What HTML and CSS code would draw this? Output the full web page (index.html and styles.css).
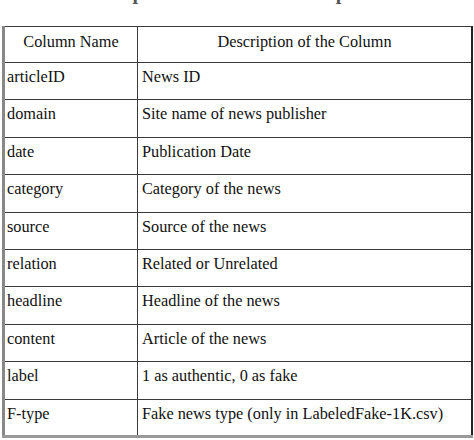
FILE: index.html
```html
<!DOCTYPE html>
<html>
<head>
<meta charset="utf-8">
<link rel="stylesheet" href="styles.css">
</head>
<body>
<div class="caption"><div class="caption-text">Table 1. Description of the dataset samples</div></div>
<table class="schema">
<thead>
<tr><th class="c1">Column Name</th><th class="c2">Description of the Column</th></tr>
</thead>
<tbody>
<tr><td>articleID</td><td>News ID</td></tr>
<tr><td>domain</td><td>Site name of news publisher</td></tr>
<tr><td>date</td><td>Publication Date</td></tr>
<tr><td>category</td><td>Category of the news</td></tr>
<tr><td>source</td><td>Source of the news</td></tr>
<tr><td>relation</td><td>Related or Unrelated</td></tr>
<tr><td>headline</td><td>Headline of the news</td></tr>
<tr><td>content</td><td>Article of the news</td></tr>
<tr><td>label</td><td>1 as authentic, 0 as fake</td></tr>
<tr><td>F-type</td><td>Fake news type (only in LabeledFake-1K.csv)</td></tr>
</tbody>
</table>
</body>
</html>
```
FILE: styles.css
```css
html, body {
  margin: 0;
  padding: 0;
  background: #fff;
}
body {
  font-family: "Liberation Serif", "Times New Roman", serif;
  color: #111;
  width: 474px;
  height: 440px;
  overflow: hidden;
}
.caption {
  height: 26px;
  overflow: hidden;
}
.caption-text {
  margin-top: -18px;
  margin-left: 6px;
  font-family: "Liberation Serif", "Times New Roman", serif;
  font-size: 20px;
  line-height: 20px;
  font-weight: bold;
  color: #555;
}
.schema {
  margin-left: 2px;
  width: 471px;
  border-collapse: collapse;
  font-family: "Liberation Serif", "Times New Roman", serif;
  font-size: 16px;
  table-layout: fixed;
  border-top: 1.5px solid #555;
  border-left: 3px solid #888;
  border-right: 2.5px solid #222;
  border-bottom: 3px solid #999;
}
.schema th, .schema td {
  font-family: "Liberation Serif", "Times New Roman", serif;
  font-size: 16.3px;
  color: #111;
  border: 1.4px solid #3a3a3a;
  padding: 0;
}
.schema th {
  font-weight: normal;
  text-align: center;
  height: 36px;
  box-sizing: border-box;
  vertical-align: top;
  padding-top: 6px;
  line-height: 18px;
}
.schema .c1 {
  width: 134px;
}
.schema td {
  vertical-align: top;
  padding: 5px 0 0 2px;
  line-height: 18px;
  box-sizing: border-box;
  height: 37.4px;
}
.schema td + td {
  padding-left: 4px;
}
```
